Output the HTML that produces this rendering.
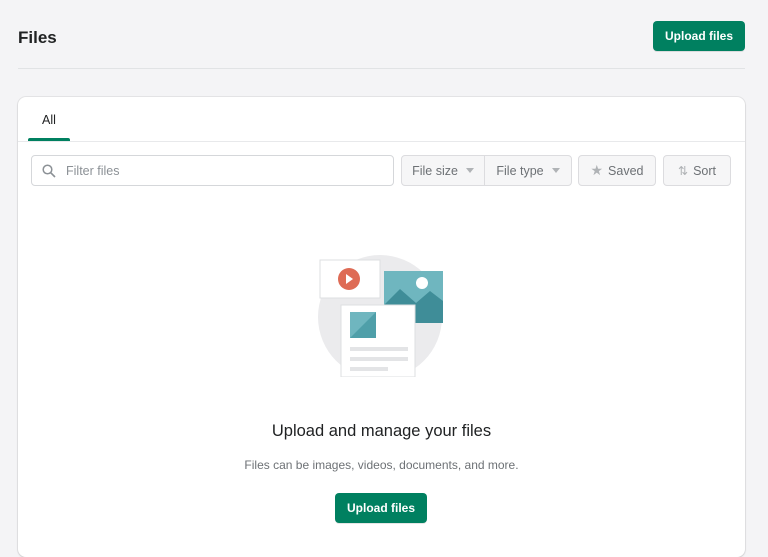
<!DOCTYPE html>
<html><head><style>
*{box-sizing:border-box;margin:0;padding:0}
body{width:768px;height:544px;background:#f4f4f6;font-family:"Liberation Sans",sans-serif;position:relative;overflow:hidden;color:#202223}
.abs{position:absolute}
.btn{background:#008060;color:#fff;font-weight:bold;font-size:12px;border-radius:4px;display:flex;align-items:center;justify-content:center;box-shadow:0 1px 0 rgba(0,0,0,.1)}
.card{left:18px;top:97px;width:727px;height:460px;background:#fff;border-radius:8px;box-shadow:0 0 0 1px rgba(0,0,0,.06),0 1px 2px rgba(0,0,0,.1)}
.fbtn{border:1px solid #dcdcdf;background:#f6f6f7;height:31px;color:#6d7175;font-size:12.5px;display:flex;align-items:center;justify-content:center}
.car{display:inline-block;width:0;height:0;border-left:4px solid transparent;border-right:4px solid transparent;border-top:5px solid #b0b3b6;margin-left:8px}
</style></head><body>
<div class="abs" style="left:18px;top:28px;font-size:17px;font-weight:bold">Files</div>
<div class="abs btn" style="left:653px;top:21px;width:92px;height:30px">Upload files</div>
<div class="abs" style="left:18px;top:68px;width:727px;height:1px;background:#e1e3e5"></div>
<div class="abs card">
 <div class="abs" style="left:24px;top:16px;font-size:12.5px">All</div>
 <div class="abs" style="left:10px;top:41px;width:42px;height:3px;background:#008060;border-radius:2px 2px 0 0"></div>
 <div class="abs" style="left:0;top:44px;width:727px;height:1px;background:#e8e9eb"></div>
 <div class="abs" style="left:13px;top:58px;width:363px;height:31px;border:1px solid #d5d7da;border-radius:4px;font-size:12.5px;color:#8c9196;display:flex;align-items:center;padding-left:34px">Filter files
  <svg class="abs" style="left:10px;top:8px" width="14" height="14" viewBox="0 0 14 14"><circle cx="5.5" cy="5.5" r="4.3" fill="none" stroke="#8c9196" stroke-width="1.5"/><path d="M8.7 8.7L13 13" stroke="#8c9196" stroke-width="1.6"/></svg></div>
 <div class="abs fbtn" style="left:383px;top:58px;width:84px;border-radius:4px 0 0 4px">File size<span class="car"></span></div>
 <div class="abs fbtn" style="left:466px;top:58px;width:88px;border-radius:0 4px 4px 0">File type<span class="car"></span></div>
 <div class="abs fbtn" style="left:560px;top:58px;width:78px;border-radius:4px"><span style="color:#b0b3b6;font-size:14px;margin-right:5px">★</span>Saved</div>
 <div class="abs fbtn" style="left:645px;top:58px;width:68px;border-radius:4px"><span style="color:#b0b3b6;font-size:12px;margin-right:5px">⇅</span>Sort</div>
 <svg class="abs" style="left:298px;top:156px" width="132" height="124" viewBox="0 0 132 124">
  <circle cx="64" cy="64" r="62" fill="#ebebed"/>
  <rect x="68" y="18" width="59" height="52" fill="#6fb6bf"/>
  <path d="M68 52L84 36L100 50L114 38L127 48V70H68Z" fill="#3f8d98"/>
  <circle cx="106" cy="30" r="6" fill="#fff"/>
  <rect x="4" y="7" width="60" height="38" fill="#fff" stroke="#dedfe1"/>
  <circle cx="33" cy="26" r="11" fill="#de6b55"/>
  <path d="M30 21L37 26L30 31Z" fill="#fff"/>
  <rect x="25" y="52" width="74" height="72" fill="#fff" stroke="#dedfe1"/>
  <rect x="34" y="59" width="26" height="26" fill="#6fb6bf"/>
  <path d="M60 59V85H34Z" fill="#4f9fa9"/>
  <rect x="34" y="94" width="58" height="4" fill="#e3e4e6"/>
  <rect x="34" y="104" width="58" height="4" fill="#e3e4e6"/>
  <rect x="34" y="114" width="38" height="4" fill="#e3e4e6"/>
 </svg>
 <div class="abs" style="left:0;width:727px;top:325px;text-align:center;font-size:16.5px">Upload and manage your files</div>
 <div class="abs" style="left:0;width:727px;top:361px;text-align:center;font-size:12px;color:#6d7175">Files can be images, videos, documents, and more.</div>
 <div class="abs btn" style="left:317px;top:396px;width:92px;height:30px">Upload files</div>
</div>
</body></html>
